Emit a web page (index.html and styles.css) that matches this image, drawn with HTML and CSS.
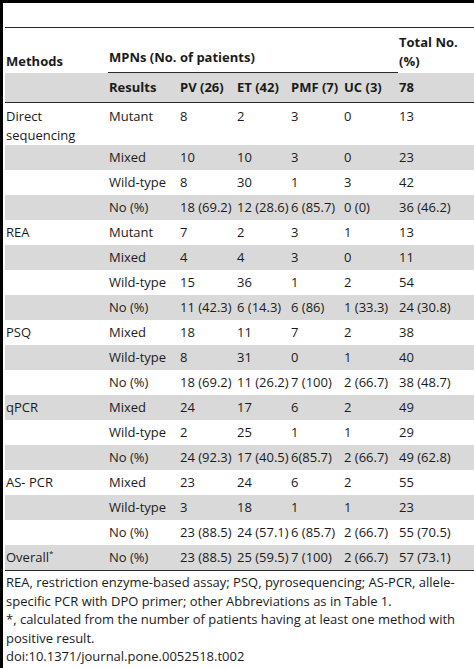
FILE: index.html
```html
<!DOCTYPE html>
<html>
<head>
<meta charset="utf-8">
<link rel="stylesheet" href="styles.css">
</head>
<body>
<div class="page">
  <div class="topbar"></div>
  <div class="content">
    <table class="data">
      <colgroup>
        <col class="c1"><col class="c2"><col class="c3"><col class="c4"><col class="c5"><col class="c6"><col class="c7">
      </colgroup>
      <thead>
        <tr class="h1">
          <th class="methods">Methods</th>
          <th class="mpns" colspan="5">MPNs (No. of patients)</th>
          <th class="total">Total No.<br>(%)</th>
        </tr>
        <tr class="h2">
          <th></th><th>Results</th><th>PV (26)</th><th>ET (42)</th><th>PMF (7)</th><th>UC (3)</th><th>78</th>
        </tr>
      </thead>
      <tbody>
        <tr class="tall"><td>Direct sequencing</td><td>Mutant</td><td>8</td><td>2</td><td>3</td><td>0</td><td>13</td></tr>
        <tr class="g"><td></td><td>Mixed</td><td>10</td><td>10</td><td>3</td><td>0</td><td>23</td></tr>
        <tr><td></td><td>Wild-type</td><td>8</td><td>30</td><td>1</td><td>3</td><td>42</td></tr>
        <tr class="g"><td></td><td>No (%)</td><td>18 (69.2)</td><td>12 (28.6)</td><td>6 (85.7)</td><td>0 (0)</td><td>36 (46.2)</td></tr>
        <tr><td>REA</td><td>Mutant</td><td>7</td><td>2</td><td>3</td><td>1</td><td>13</td></tr>
        <tr class="g"><td></td><td>Mixed</td><td>4</td><td>4</td><td>3</td><td>0</td><td>11</td></tr>
        <tr><td></td><td>Wild-type</td><td>15</td><td>36</td><td>1</td><td>2</td><td>54</td></tr>
        <tr class="g"><td></td><td>No (%)</td><td>11 (42.3)</td><td>6 (14.3)</td><td>6 (86)</td><td>1 (33.3)</td><td>24 (30.8)</td></tr>
        <tr><td>PSQ</td><td>Mixed</td><td>18</td><td>11</td><td>7</td><td>2</td><td>38</td></tr>
        <tr class="g"><td></td><td>Wild-type</td><td>8</td><td>31</td><td>0</td><td>1</td><td>40</td></tr>
        <tr><td></td><td>No (%)</td><td>18 (69.2)</td><td>11 (26.2)</td><td>7 (100)</td><td>2 (66.7)</td><td>38 (48.7)</td></tr>
        <tr class="g"><td>qPCR</td><td>Mixed</td><td>24</td><td>17</td><td>6</td><td>2</td><td>49</td></tr>
        <tr><td></td><td>Wild-type</td><td>2</td><td>25</td><td>1</td><td>1</td><td>29</td></tr>
        <tr class="g"><td></td><td>No (%)</td><td>24 (92.3)</td><td>17 (40.5)</td><td>6(85.7)</td><td>2 (66.7)</td><td>49 (62.8)</td></tr>
        <tr><td>AS- PCR</td><td>Mixed</td><td>23</td><td>24</td><td>6</td><td>2</td><td>55</td></tr>
        <tr class="g"><td></td><td>Wild-type</td><td>3</td><td>18</td><td>1</td><td>1</td><td>23</td></tr>
        <tr><td></td><td>No (%)</td><td>23 (88.5)</td><td>24 (57.1)</td><td>6 (85.7)</td><td>2 (66.7)</td><td>55 (70.5)</td></tr>
        <tr class="g last"><td>Overall<sup>*</sup></td><td>No (%)</td><td>23 (88.5)</td><td>25 (59.5)</td><td>7 (100)</td><td>2 (66.7)</td><td>57 (73.1)</td></tr>
      </tbody>
    </table>
    <div class="notes">
      <p>REA, restriction enzyme-based assay; PSQ, pyrosequencing; AS-PCR, allele-specific PCR with DPO primer; other Abbreviations as in Table 1.</p>
      <p>*, calculated from the number of patients having at least one method with positive result.</p>
      <p>doi:10.1371/journal.pone.0052518.t002</p>
    </div>
  </div>
</div>
</body>
</html>
```

FILE: styles.css
```css
html, body {
  margin: 0;
  padding: 0;
  background: #fff;
}
body {
  font-family: "Open Sans", "DejaVu Sans", sans-serif;
  font-size: 13px;
  color: #1b1b1b;
}
.page {
  border-left: 3px solid #000;
  min-height: 668px;
  box-sizing: border-box;
}
.topbar {
  height: 3px;
  background: #000;
}
.content {
  padding-top: 24px;
  padding-left: 2px;
}
.data {
  width: 469px;
  table-layout: fixed;
  border-collapse: separate;
  border-spacing: 0;
  border-top: 1px solid #2a2a2a;
}
.c1 { width: 103px; }
.c2 { width: 71px; }
.c3 { width: 57px; }
.c4 { width: 54px; }
.c5 { width: 53px; }
.c6 { width: 55px; }
.c7 { width: 76px; }
.data th, .data td {
  text-align: left;
  padding: 3px 0 3px 1px;
  line-height: 19px;
  white-space: nowrap;
  vertical-align: middle;
}
.data th {
  font-weight: 700;
}
.h1 th {
  vertical-align: bottom;
  padding-top: 5px;
  padding-bottom: 2px;
  height: 38px;
}
.h1 .mpns {
  padding-top: 1px;
  padding-bottom: 5px;
  border-bottom: 1px solid #2a2a2a;
}
.h2 th {
  background: #d9d9d9;
  height: 23px;
  border-bottom: 1px solid #2a2a2a;
}
.data tr.tall td {
  white-space: normal;
  vertical-align: top;
  padding-top: 4px;
  padding-bottom: 0;
  height: 38px;
}
.data tbody td {
  height: 19px;
}
.g td {
  background: #d9d9d9;
}
.last td {
  border-bottom: 1px solid #2a2a2a;
  height: 18px;
}
sup {
  font-size: 8px;
  line-height: 0;
  vertical-align: 6px;
}
.notes {
  padding-top: 2px;
  padding-left: 1px;
  padding-right: 2px;
}
.notes p {
  margin: 0;
  line-height: 18.6px;
}
```
